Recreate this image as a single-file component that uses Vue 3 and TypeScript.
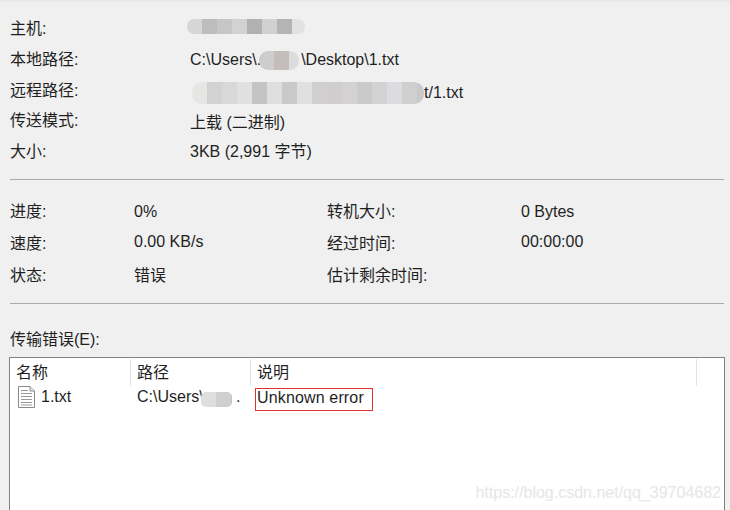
<script setup lang="ts">
const hostCells = ['#d6d6d6','#bdbdbd','#c6c6c6','#d2d2d2','#b1b1b1','#d0d1d3','#b5b4b4','#e2e2e2']
const userCells = ['#cdcdcd','#c4bdbc','#dcdcdc']
const remoteCells = ['#e6e6e4','#d2d2d2','#d8d8d8','#e0e0e0','#c6c3c5','#dedede','#c9c9c7','#e0e0e0','#d0cece','#cfcdcd','#d3d1d1','#cbcaca','#d2d2d4','#dcdce0','#cfcfcf','#c9c9cb']
const listUser = ['#dedede','#cfcfcf','#c2c2c2','#c8c8c8']
const transfer = [
  ['进度:', '0%', '转机大小:', '0 Bytes'],
  ['速度:', '0.00 KB/s', '经过时间:', '00:00:00'],
  ['状态:', '错误', '估计剩余时间:', ''],
]
</script>

<template>
  <div class="window">
    <section class="info">
      <div class="row"><span>主机:</span><span class="val mosaic host"><i v-for="(c, i) in hostCells" :key="i" :style="{ background: c }"></i></span></div>
      <div class="row"><span>本地路径:</span><span class="val">C:\Users\.<span class="mosaic user"><i v-for="(c, i) in userCells" :key="i" :style="{ background: c }"></i></span>\Desktop\1.txt</span></div>
      <div class="row"><span>远程路径:</span><span class="val low"><span class="mosaic remote"><i v-for="(c, i) in remoteCells" :key="i" :style="{ background: c }"></i></span>t/1.txt</span></div>
      <div class="row"><span>传送模式:</span><span class="val low">上载 (二进制)</span></div>
      <div class="row"><span>大小:</span><span class="val">3KB (2,991 字节)</span></div>
    </section>

    <hr class="rule" />

    <section class="stats">
      <div v-for="r in transfer" :key="r[0]" class="stat">
        <span>{{ r[0] }}</span><span>{{ r[1] }}</span><span>{{ r[2] }}</span><span>{{ r[3] }}</span>
      </div>
    </section>

    <hr class="rule second" />

    <div class="errlabel">传输错误(E):</div>
    <div class="list">
      <div class="head">
        <span class="c1">名称</span>
        <span class="c2">路径</span>
        <span class="c3">说明</span>
        <span class="c4"></span>
      </div>
      <div class="item">
        <span class="c1 file">
          <svg width="17" height="22" viewBox="0 0 17 22" class="icon">
            <path d="M.5.5H12L16.500 5V21.500H.5Z" fill="#fff" stroke="#8a8a8a" />
            <path d="M12 .5V5H16.500" fill="#e4e4e4" stroke="#8a8a8a" />
            <path d="M3 4.500H10M3 7.500H14M3 10.500H14M3 13.500H14M3 16.500H14M3 19H14" stroke="#9a9a9a" />
          </svg>
          1.txt
        </span>
        <span class="c2">C:\Users\<span class="mosaic small"><i v-for="(c, i) in listUser" :key="i" :style="{ background: c }"></i></span> .</span>
        <span class="c3"><span class="boxed">Unknown error</span></span>
      </div>
      <span class="mark">https://blog.csdn.net/qq_39704682</span>
    </div>
  </div>
</template>

<style scoped>
.window {
  box-sizing: border-box;
  width: 730px;
  height: 510px;
  overflow: hidden;
  background: #f0f0f0;
  border-top: 2px solid #e9e9e9;
  font-family: "Liberation Sans", "Noto Sans CJK SC", sans-serif;
  font-size: 16px;
  color: #1f1f1f;
  padding: 12px 4px 0 10px;
}
.info {
  display: flex;
  flex-direction: column;
}
.row {
  display: grid;
  grid-template-columns: 180px 1fr;
  height: 30.8px;
  line-height: 30px;
}
.val.low {
  position: relative;
  top: 2px;
}
.mosaic {
  display: inline-flex;
  overflow: hidden;
  vertical-align: middle;
  border-radius: 7px;
}
.mosaic i {
  display: block;
  width: 15px;
  flex: none;
  height: 100%;
}
.host { height: 15px; width: 118px; margin-left: -3px; position: relative; top: 5px; }
.user { height: 19px; margin: 0 2px 0 -2px; border-radius: 9px; width: 40px; }
.remote { height: 22px; width: 232px; margin-left: 2px; border-radius: 10px; }
.small { height: 15px; width: 31px; margin-left: -3px; border-radius: 5px; position: relative; top: 2px; }
.rule {
  border: 0;
  height: 1px;
  background: #a9a9a9;
  margin: 11px 0 0;
  width: 714px;
}
.stats {
  margin-top: 17px;
}
.stat {
  display: grid;
  grid-template-columns: 124px 193px 194px 1fr;
  height: 32px;
  line-height: 30px;
}
.stat:nth-child(2) span:nth-child(even) {
  position: relative;
  top: -2px;
}
.rule.second {
  margin-top: 10px;
}
.errlabel {
  margin-top: 26px;
  height: 20px;
  line-height: 20px;
}
.list {
  position: relative;
  box-sizing: border-box;
  width: 716px;
  height: 160px;
  margin: 7px 0 0 -1px;
  background: #fff;
  border: 1px solid #7e8288;
  border-bottom: 0;
}
.head, .item {
  display: grid;
  grid-template-columns: 121px 120px 446px 1fr;
}
.head {
  height: 26px;
  line-height: 27px;
}
.head span {
  box-sizing: border-box;
  padding-left: 6px;
  border-right: 1px solid #e4e4e8;
  margin-top: 1px;
}
.head .c4 { border: 0; }
.item {
  line-height: 26px;
  height: 30px;
}
.item > span {
  padding-left: 6px;
  white-space: nowrap;
}
.file {
  display: flex;
  align-items: center;
  gap: 6px;
  padding-left: 8px !important;
  height: 26px;
}
.icon { flex: none; }
.boxed {
  display: inline-block;
  box-sizing: border-box;
  width: 118px;
  height: 23px;
  line-height: 17px;
  padding-left: 1px;
  margin: 4px 0 0 -2px;
  border: 1px solid #e03030;
  letter-spacing: .15px;
}
.mark {
  position: absolute;
  right: 3px;
  bottom: 15px;
  font-size: 16px;
  color: #e6e6e6;
}
</style>
